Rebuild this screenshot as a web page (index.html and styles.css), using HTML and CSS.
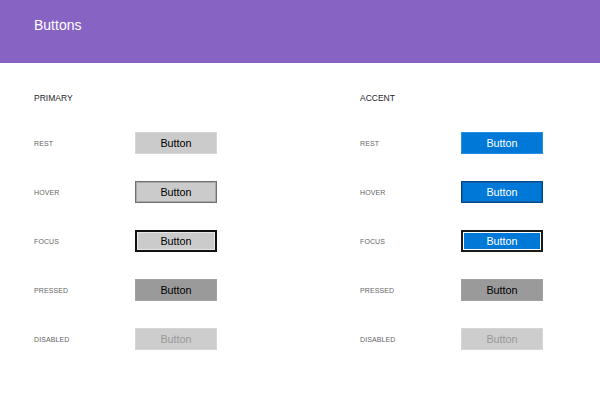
FILE: index.html
```html
<!DOCTYPE html>
<html>
<head>
<meta charset="utf-8">
<link rel="stylesheet" href="styles.css">
</head>
<body>
<header class="header"><h1 class="title">Buttons</h1></header>
<main class="main">
  <section class="col">
    <h2 class="heading">PRIMARY</h2>
    <div class="rows">
      <div class="row"><span class="label">REST</span><button class="btn primary rest">Button</button></div>
      <div class="row"><span class="label">HOVER</span><button class="btn primary hover">Button</button></div>
      <div class="row"><span class="label">FOCUS</span><button class="btn primary focus">Button</button></div>
      <div class="row"><span class="label">PRESSED</span><button class="btn primary pressed">Button</button></div>
      <div class="row"><span class="label">DISABLED</span><button class="btn primary disabled">Button</button></div>
    </div>
  </section>
  <section class="col">
    <h2 class="heading">ACCENT</h2>
    <div class="rows">
      <div class="row"><span class="label">REST</span><button class="btn accent rest">Button</button></div>
      <div class="row"><span class="label">HOVER</span><button class="btn accent hover">Button</button></div>
      <div class="row"><span class="label">FOCUS</span><button class="btn accent focus">Button</button></div>
      <div class="row"><span class="label">PRESSED</span><button class="btn accent pressed">Button</button></div>
      <div class="row"><span class="label">DISABLED</span><button class="btn accent disabled">Button</button></div>
    </div>
  </section>
</main>
</body>
</html>
```
FILE: styles.css
```css
* { box-sizing: border-box; }
body {
  margin: 0;
  font-family: "Liberation Sans", Arial, sans-serif;
  background: #fff;
}
.header {
  height: 63px;
  background: #8764c4;
  padding: 16px 34px 0;
}
.title {
  margin: 0;
  color: #fff;
  font-size: 14px;
  font-weight: normal;
  line-height: 18px;
}
.main {
  display: grid;
  grid-template-columns: 326px 1fr;
  padding: 0 0 0 34px;
}
.heading {
  margin: 0;
  padding-top: 29px;
  font-size: 8.5px;
  font-weight: normal;
  line-height: 12px;
  color: #1e1e2e;
}
.rows {
  display: flex;
  flex-direction: column;
  gap: 27px;
  padding-top: 28px;
}
.row {
  display: flex;
  align-items: center;
  height: 22px;
}
.label {
  width: 101px;
  font-size: 7px;
  color: #666;
  letter-spacing: 0.1px;
}
.btn {
  width: 82px;
  height: 22px;
  padding: 0;
  font-family: "Liberation Sans", Arial, sans-serif;
  font-size: 10.8px;
  border: 1px solid transparent;
  cursor: default;
}
.primary { background: #cbcbcb; color: #000; }
.primary.rest { border-color: #d6d6d6; }
.primary.hover { border: 1px solid #6f6f6f; box-shadow: inset 0 0 0 1px #a8a8a8; }
.primary.focus { border: 2px solid #111; box-shadow: inset 0 0 0 1px #e6e6e6; }
.primary.pressed { background: #9a9a9a; border-color: #a2a2a2; }
.primary.disabled { background: #cdcdcd; color: #999; border-color: #d6d6d6; }

.accent { background: #0078d7; color: #fff; }
.accent.rest { border-color: #2d8fe0; }
.accent.hover { border: 1px solid #004a8a; box-shadow: inset 0 0 0 1px #0a5fad; }
.accent.focus { border: 2px solid #1a1a1a; box-shadow: inset 0 0 0 1px #fff; }
.accent.pressed { background: #9a9a9a; color: #000; border-color: #a2a2a2; }
.accent.disabled { background: #cdcdcd; color: #999; border-color: #d6d6d6; }
```
